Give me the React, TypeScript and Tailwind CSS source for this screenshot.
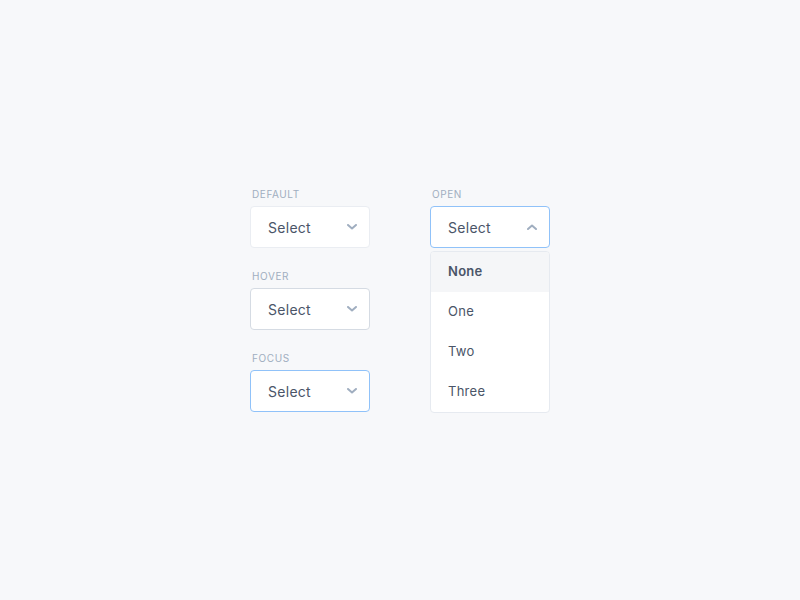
import { ReactNode } from "react";

const font = { fontFamily: '"Inter", "Liberation Sans", sans-serif' };

function Chevron({ up = false }: { up?: boolean }) {
  return (
    <svg width="10" height="6" viewBox="0 0 10 6" fill="none" className="text-[#a0aec0]">
      <path
        d={up ? "M1 5L5 1.5L9 5" : "M1 1L5 4.5L9 1"}
        stroke="currentColor"
        strokeWidth="2"
        strokeLinecap="round"
        strokeLinejoin="round"
      />
    </svg>
  );
}

function Field({ label, children }: { label: string; children: ReactNode }) {
  return (
    <div className="flex flex-col">
      <span className="text-[10px] leading-[12px] tracking-[0.06em] text-[#a0aec0] mb-[6px] ml-[2px]">
        {label}
      </span>
      {children}
    </div>
  );
}

function SelectBox({ border, up }: { border: string; up?: boolean }) {
  return (
    <div
      className={`w-[120px] h-[42px] bg-white rounded-[4px] border ${border} flex items-center justify-between pl-[17px] pr-[12px]`}
    >
      <span className="text-[14px] text-[#4a5568] tracking-[0.02em]">Select</span>
      <Chevron up={up} />
    </div>
  );
}

export default function App() {
  const options = ["None", "One", "Two", "Three"];
  return (
    <div className="w-[800px] h-[600px] bg-[#f7f8fa] flex justify-center pt-[188px]" style={font}>
      <div className="flex gap-[60px]">
        <div className="flex flex-col gap-[22px]">
          <Field label="DEFAULT">
            <SelectBox border="border-[#eaedf2]" />
          </Field>
          <Field label="HOVER">
            <SelectBox border="border-[#d5dbe3]" />
          </Field>
          <Field label="FOCUS">
            <SelectBox border="border-[#90c2f9]" />
          </Field>
        </div>
        <div className="flex flex-col">
          <Field label="OPEN">
            <SelectBox border="border-[#90c2f9]" up />
          </Field>
          <div className="mt-[3px] w-[120px] bg-white border border-[#e6eaf0] rounded-[4px] overflow-hidden">
            {options.map((o, i) => (
              <div
                key={o}
                className={`h-[40px] flex items-center pl-[17px] text-[13px] text-[#4a5568] tracking-[0.02em] ${
                  i === 0 ? "bg-[#f5f6f8] font-semibold" : ""
                }`}
              >
                {o}
              </div>
            ))}
          </div>
        </div>
      </div>
    </div>
  );
}
